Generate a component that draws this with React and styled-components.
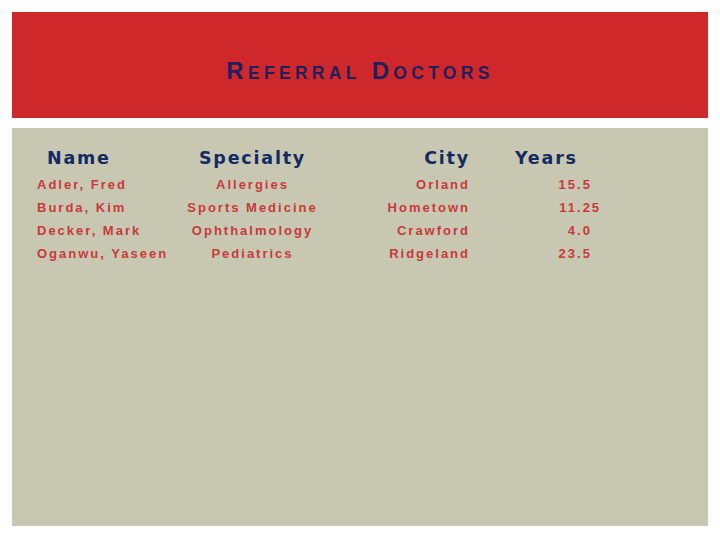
import React from "react";
import styled, { createGlobalStyle } from "styled-components";

const Global = createGlobalStyle`
  html, body { margin: 0; padding: 0; background: #ffffff; }
  body { font-family: "Liberation Sans", Arial, sans-serif; }
`;

const Page = styled.div`
  width: 720px;
  height: 540px;
  box-sizing: border-box;
  padding: 12px 12px 0 12px;
  display: flex;
  flex-direction: column;
  gap: 10px;
`;

const Band = styled.header`
  height: 106px;
  background: #cf282b;
  box-sizing: border-box;
  padding-top: 44px;
  display: flex;
  justify-content: center;
`;

const Title = styled.h1`
  margin: 0;
  font-family: "Liberation Sans", Arial, sans-serif;
  font-size: 24px;
  font-weight: 700;
  color: #1f1f5e;
  line-height: 30px;
  letter-spacing: 4.3px;
  white-space: pre;
`;

const Big = styled.span`
  font-size: 24px;
`;

const Small = styled.span`
  font-size: 17.5px;
  text-transform: uppercase;
`;

const Panel = styled.section`
  height: 398px;
  background: #c8c7b2;
  box-sizing: border-box;
  padding: 18px 0 0 25px;
`;

const Table = styled.div`
  display: grid;
  grid-template-columns: 138px 155px 140px auto;
  align-items: baseline;
`;

const Head = styled.div`
  font-family: "DejaVu Sans", "Liberation Sans", sans-serif;
  font-weight: 700;
  font-size: 17.5px;
  line-height: 24px;
  letter-spacing: 1.8px;
  color: #142a62;
  text-align: ${(p) => p.$align || "left"};
  padding-left: ${(p) => p.$indent || 0}px;
  margin-bottom: 3px;
`;

const Cell = styled.div`
  font-family: "Liberation Sans", Arial, sans-serif;
  font-weight: 700;
  font-size: 13px;
  line-height: 23px;
  letter-spacing: 2px;
  color: #c8393c;
  text-align: ${(p) => p.$align || "left"};
  white-space: nowrap;
`;

const NumCell = styled(Cell)`
  display: flex;
`;

const IntPart = styled.span`
  display: inline-block;
  width: 107px;
  text-align: right;
`;

const rows = [
  ["Adler, Fred", "Allergies", "Orland", "15.5"],
  ["Burda, Kim", "Sports Medicine", "Hometown", "11.25"],
  ["Decker, Mark", "Ophthalmology", "Crawford", "4.0"],
  ["Oganwu, Yaseen", "Pediatrics", "Ridgeland", "23.5"],
];

function Years({ value }) {
  const [i, d] = value.split(".");
  return (
    <NumCell>
      <IntPart>{i}</IntPart>
      <span>.{d}</span>
    </NumCell>
  );
}

export default function App() {
  return (
    <>
      <Global />
      <Page>
        <Band>
          <Title>
            <Big>R</Big>
            <Small>eferral</Small>
            <Big> D</Big>
            <Small>octors</Small>
          </Title>
        </Band>
        <Panel>
          <Table>
            <Head $indent={10}>Name</Head>
            <Head $align="center">Specialty</Head>
            <Head $align="right">City</Head>
            <Head $indent={45}>Years</Head>
            {rows.map((r) => (
              <React.Fragment key={r[0]}>
                <Cell>{r[0]}</Cell>
                <Cell $align="center">{r[1]}</Cell>
                <Cell $align="right">{r[2]}</Cell>
                <Years value={r[3]} />
              </React.Fragment>
            ))}
          </Table>
        </Panel>
      </Page>
    </>
  );
}
